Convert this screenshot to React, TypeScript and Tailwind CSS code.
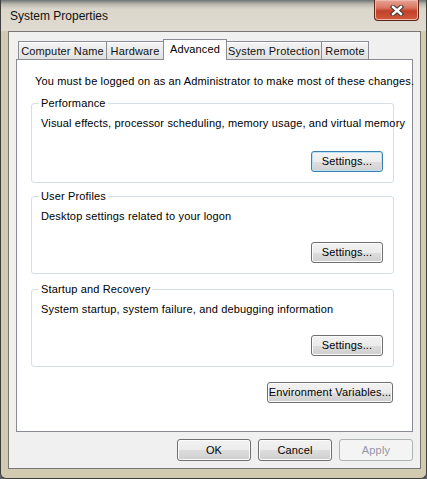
import type { ReactNode } from 'react';

const tabs = [
  { label: 'Computer Name', w: 'w-[89px]' },
  { label: 'Hardware', w: 'w-[58px]' },
  { label: 'Advanced', w: 'w-[64px]', active: true },
  { label: 'System Protection', w: 'w-[96px]' },
  { label: 'Remote', w: 'w-[48px]' },
];

const btnFace =
  'bg-[linear-gradient(to_bottom,#f2f2f2_0%,#ebebeb_50%,#dddddd_51%,#cfcfcf_100%)] shadow-[inset_0_0_0_1px_#fbfbfb]';

function Button({ children, className, focused, disabled }: { children: ReactNode; className: string; focused?: boolean; disabled?: boolean }) {
  let look = 'border-[#707070] text-black ' + btnFace;
  if (focused) look = 'border-[#3c7fb1] text-black bg-[linear-gradient(to_bottom,#f4f4f4_0%,#ececec_50%,#dedede_51%,#d2d2d2_100%)] shadow-[inset_0_0_0_1px_#b9e2f7]';
  if (disabled) look = 'border-[#adb2b5] text-[#9396a6] bg-[#f4f4f4]';
  return (
    <div className={`flex items-center justify-center whitespace-nowrap border rounded-[3px] ${look} ${className}`}>
      {children}
    </div>
  );
}

function GroupBox({ title, text, className, focused }: { title: string; text: string; className: string; focused?: boolean }) {
  return (
    <div className={`relative flex flex-col border border-[#d5dfe5] rounded-[3px] ml-[14px] w-[363px] pl-[9px] pr-[10px] pt-[12px] pb-[10px] ${className}`}>
      <span className="absolute left-[7px] top-[-8px] bg-white px-[2px] leading-[15px]">{title}</span>
      <div className="leading-[15px] whitespace-nowrap">{text}</div>
      <Button focused={focused} className="mt-auto self-end w-[72px] h-[21px]">Settings...</Button>
    </div>
  );
}

export default function App() {
  return (
    <div className="w-[427px] h-[479px] bg-[#5b6268] font-['Liberation_Sans',Arial,sans-serif] text-[11px] tracking-[0.15px] text-black">
      <div className="h-full flex flex-col bg-[#d3cbb1] border-x border-b border-[#3e3e3c] rounded-b-[6px]">
        <div className="h-[31px] flex items-start justify-between pl-[9px] pr-[7px] bg-[linear-gradient(to_bottom,#6e7274_0px,#b8b6ad_4px,#dad6ca_9px,#dfdbd1_100%)]">
          <span className="mt-[9px] leading-[15px] text-[12px] tracking-normal text-[#111]">System Properties</span>
          <div className="w-[45px] h-[21px] flex items-center justify-center rounded-b-[4px] border border-t-0 border-[#5e2418] bg-[linear-gradient(to_bottom,#e8a596_0%,#d9745e_40%,#c2412a_55%,#d15a3c_100%)] shadow-[inset_0_0_0_1px_#f0b8aa]">
            <svg width="14" height="11" viewBox="0 0 14 11">
              <path d="M3 2 L11 9 M11 2 L3 9" stroke="#3a3a3a" strokeWidth="4.4" strokeLinecap="square" />
              <path d="M3 2 L11 9 M11 2 L3 9" stroke="#ffffff" strokeWidth="2.4" strokeLinecap="square" />
            </svg>
          </div>
        </div>
        <div className="flex-1 flex flex-col ml-[7px] mr-[5px] mb-[9px] border border-[#777672] bg-[#f0f0f0] px-[7px] pt-[7px] pb-[7px]">
          <div className="h-[20px] flex items-end pl-[2px]">
            {tabs.map((t, i) =>
              t.active ? (
                <div
                  key={t.label}
                  className={`relative z-10 -ml-px h-[21px] mb-[-1px] ${t.w} flex justify-center pt-[2px] whitespace-nowrap bg-white border border-b-0 border-[#898c95] leading-[15px]`}
                >
                  {t.label}
                </div>
              ) : (
                <div
                  key={t.label}
                  className={`${i > 0 ? '-ml-px' : ''} h-[18px] ${t.w} flex justify-center pt-[2px] whitespace-nowrap border border-b-0 border-[#898c95] bg-[linear-gradient(to_bottom,#f3f3f3_0%,#ebebeb_50%,#e1e1e1_100%)] shadow-[inset_0_1px_0_#ffffff] leading-[15px] text-[#111]`}
                >
                  {t.label}
                </div>
              )
            )}
          </div>
          <div className="flex-1 flex flex-col bg-white border border-[#898c95] pt-[14px]">
            <div className="pl-[18px] leading-[15px] whitespace-nowrap">You must be logged on as an Administrator to make most of these changes.</div>
            <GroupBox focused className="mt-[14px] h-[80px]" title="Performance" text="Visual effects, processor scheduling, memory usage, and virtual memory" />
            <GroupBox className="mt-[13px] h-[78px]" title="User Profiles" text="Desktop settings related to your logon" />
            <GroupBox className="mt-[15px] h-[78px]" title="Startup and Recovery" text="System startup, system failure, and debugging information" />
            <div className="mt-[15px] ml-[14px] w-[363px] flex justify-end pr-px">
              <Button className="w-[126px] h-[21px]">Environment Variables...</Button>
            </div>
          </div>
          <div className="mt-[7px] flex justify-end gap-[7px]">
            <Button className="w-[74px] h-[22px]">OK</Button>
            <Button className="w-[74px] h-[22px]">Cancel</Button>
            <Button disabled className="w-[74px] h-[22px]">Apply</Button>
          </div>
        </div>
      </div>
    </div>
  );
}
